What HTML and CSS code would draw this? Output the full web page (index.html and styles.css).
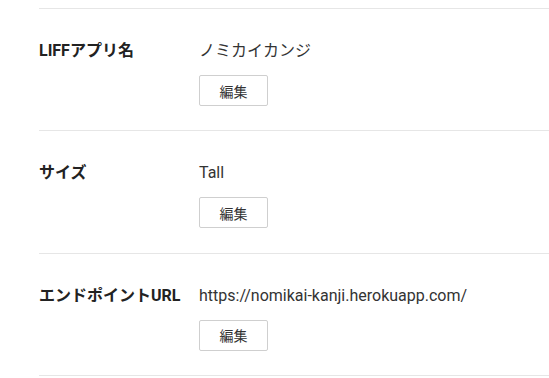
FILE: index.html
```html
<!DOCTYPE html>
<html lang="ja">
<head>
<meta charset="utf-8">
<link rel="stylesheet" href="styles.css">
</head>
<body>
<div class="list">
  <div class="row">
    <div class="label">LIFFアプリ名</div>
    <div class="content">
      <div class="value">ノミカイカンジ</div>
      <button class="edit">編集</button>
    </div>
  </div>
  <div class="row">
    <div class="label">サイズ</div>
    <div class="content">
      <div class="value">Tall</div>
      <button class="edit">編集</button>
    </div>
  </div>
  <div class="row">
    <div class="label">エンドポイントURL</div>
    <div class="content">
      <div class="value">https://nomikai-kanji.herokuapp.com/</div>
      <button class="edit">編集</button>
    </div>
  </div>
</div>
</body>
</html>
```
FILE: styles.css
```css
html, body {
  margin: 0;
  padding: 0;
  background: #fff;
}
body {
  font-family: "Roboto", "Noto Sans CJK JP", sans-serif;
  color: #333;
  overflow: hidden;
}
.list {
  padding-top: 8px;
  margin-left: 39px;
  border-bottom: 1px solid #e6e6e6;
}
.row {
  display: flex;
  border-top: 1px solid #e6e6e6;
  padding: 30px 0 24.33px;
}
.label {
  width: 160px;
  flex: none;
  font-size: 16px;
  line-height: 24px;
  font-weight: 700;
  color: #222;
}
.content {
  display: flex;
  flex-direction: column;
  align-items: flex-start;
  gap: 12px;
}
.value {
  font-size: 16px;
  line-height: 24px;
  color: #333;
}
.edit {
  width: 69px;
  height: 31px;
  padding: 0;
  margin: 0;
  background: #fff;
  border: 1px solid #cfcfcf;
  border-radius: 2px;
  font-family: "Roboto", "Noto Sans CJK JP", sans-serif;
  font-size: 14px;
  color: #333;
}
```
